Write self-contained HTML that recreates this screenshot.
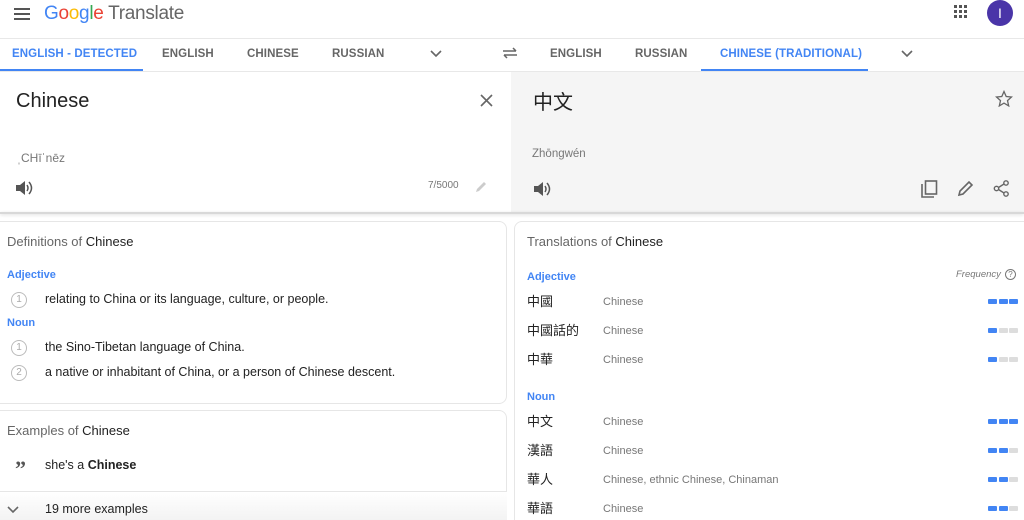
<!DOCTYPE html>
<html><head><meta charset="utf-8"><style>
*{margin:0;padding:0;box-sizing:border-box}
html,body{width:1024px;height:520px;overflow:hidden}
body{background:#fff;font-family:"Liberation Sans","Noto Sans CJK TC",sans-serif;color:#222;position:relative}
.a{position:absolute;white-space:nowrap;line-height:1.2}
.tab{position:absolute;top:47px;font-size:11.5px;font-weight:bold;color:#666;letter-spacing:.1px;line-height:14px}
.blue{color:#4285f4}
.card{position:absolute;border:1px solid #e6e6e6;border-radius:8px;background:#fff}
.num{position:absolute;width:16px;height:16px;border:1px solid #bbb;border-radius:50%;font-size:10px;color:#aaa;text-align:center;line-height:14px}
.f{position:absolute;left:988px;width:32px;height:5px;display:flex;gap:1.5px}
.f i{display:block;width:9px;height:5px;border-radius:1px;background:#4285f4}
.f i.o{background:#ddd}
.zh{font-size:13px;color:#222;line-height:16px;font-family:"Noto Sans CJK TC",sans-serif}
.en{font-size:11px;color:#777;line-height:14px}
</style></head><body>
<!-- header -->
<div class="a" style="left:14px;top:8px;width:16px;height:2px;background:#555;box-shadow:0 5px 0 #555,0 10px 0 #555"></div>
<div class="a" style="left:44px;top:3px;font-size:19px;line-height:22px;letter-spacing:-.3px"><span style="color:#4285f4">G</span><span style="color:#ea4335">o</span><span style="color:#fbbc05">o</span><span style="color:#4285f4">g</span><span style="color:#34a853">l</span><span style="color:#ea4335">e</span><span style="color:#666"> Translate</span></div>
<svg class="a" style="left:954px;top:5px" width="14" height="14"><g fill="#555"><rect x="0" y="0" width="3" height="3"/><rect x="5" y="0" width="3" height="3"/><rect x="10" y="0" width="3" height="3"/><rect x="0" y="5" width="3" height="3"/><rect x="5" y="5" width="3" height="3"/><rect x="10" y="5" width="3" height="3"/><rect x="0" y="10" width="3" height="3"/><rect x="5" y="10" width="3" height="3"/><rect x="10" y="10" width="3" height="3"/></g></svg>
<div class="a" style="left:987px;top:0;width:26px;height:26px;border-radius:50%;background:#4a35a8;color:#fff;font-size:14px;text-align:center;line-height:26px">I</div>
<div class="a" style="left:0;top:38px;width:1024px;height:1px;background:#e8e8e8"></div>
<!-- tabs -->
<div class="tab blue" style="left:12px">ENGLISH - DETECTED</div>
<div class="tab" style="left:162px">ENGLISH</div>
<div class="tab" style="left:247px">CHINESE</div>
<div class="tab" style="left:332px">RUSSIAN</div>
<svg class="a" style="left:430px;top:50px" width="12" height="8"><path d="M1 1l5 5 5-5" fill="none" stroke="#666" stroke-width="1.6"/></svg>
<svg class="a" style="left:502px;top:47px" width="16" height="12"><path d="M1 4h13M11 1l3 3M15 8H2M5 11L2 8" fill="none" stroke="#666" stroke-width="1.5"/></svg>
<div class="tab" style="left:550px">ENGLISH</div>
<div class="tab" style="left:635px">RUSSIAN</div>
<div class="tab blue" style="left:720px">CHINESE (TRADITIONAL)</div>
<svg class="a" style="left:901px;top:50px" width="12" height="8"><path d="M1 1l5 5 5-5" fill="none" stroke="#666" stroke-width="1.6"/></svg>
<div class="a" style="left:0;top:69px;width:143px;height:3px;background:#4285f4"></div>
<div class="a" style="left:701px;top:69px;width:167px;height:3px;background:#4285f4"></div>
<div class="a" style="left:0;top:71px;width:1024px;height:1px;background:#e8e8e8"></div>
<!-- panels -->
<div class="a" style="left:511px;top:72px;width:513px;height:140px;background:#f5f5f5"></div>
<div class="a" style="left:0;top:212px;width:1024px;height:2px;background:#d8d8d8;box-shadow:0 1px 3px rgba(0,0,0,.15)"></div>
<div class="a" style="left:16px;top:89px;font-size:20px;line-height:24px;color:#222">Chinese</div>
<svg class="a" style="left:480px;top:94px" width="13" height="13"><path d="M1 1l11 11M12 1L1 12" stroke="#666" stroke-width="1.6"/></svg>
<div class="a" style="left:17px;top:151px;font-size:12px;color:#777">ˌCHīˈnēz</div>
<svg class="a" style="left:15px;top:180px" width="18" height="16"><path d="M1 5h4l5-4v14l-5-4H1z" fill="#555"/><path d="M12 5q2 3 0 6M14 2q5 6 0 12" fill="none" stroke="#555" stroke-width="1.5"/></svg>
<div class="a" style="left:428px;top:180px;font-size:10px;color:#777">7/5000</div>
<svg class="a" style="left:475px;top:181px" width="12" height="12"><path d="M1 11l1-3 7-7 2 2-7 7z" fill="#ccc"/></svg>
<div class="a" style="left:533px;top:88px;font-size:20px;line-height:26px;color:#222;font-family:'Noto Sans CJK TC',sans-serif">中文</div>
<svg class="a" style="left:995px;top:90px" width="18" height="17"><path d="M9 1.5l2.2 5 5.3.5-4 3.6 1.2 5.3L9 13.1l-4.7 2.8 1.2-5.3-4-3.6 5.3-.5z" fill="none" stroke="#666" stroke-width="1.3"/></svg>
<div class="a" style="left:532px;top:148px;font-size:11.5px;color:#777">Zhōngwén</div>
<svg class="a" style="left:533px;top:181px" width="18" height="16"><path d="M1 5h4l5-4v14l-5-4H1z" fill="#555"/><path d="M12 5q2 3 0 6M14 2q5 6 0 12" fill="none" stroke="#555" stroke-width="1.5"/></svg>
<svg class="a" style="left:920px;top:180px" width="18" height="18"><path d="M2 4v13h12" fill="none" stroke="#666" stroke-width="1.6"/><rect x="5.5" y="1" width="11" height="13" fill="none" stroke="#666" stroke-width="1.6"/></svg>
<svg class="a" style="left:957px;top:180px" width="17" height="17"><path d="M2 15l1-4 9-9 3 3-9 9z" fill="none" stroke="#666" stroke-width="1.6"/></svg>
<svg class="a" style="left:993px;top:180px" width="17" height="17"><circle cx="13" cy="3" r="2.2" fill="none" stroke="#666" stroke-width="1.4"/><circle cx="3.5" cy="8.5" r="2.2" fill="none" stroke="#666" stroke-width="1.4"/><circle cx="13" cy="14" r="2.2" fill="none" stroke="#666" stroke-width="1.4"/><path d="M5.5 7.5l5.5-3.5M5.5 9.5l5.5 3.5" stroke="#666" stroke-width="1.4"/></svg>
<!-- definitions -->
<div class="card" style="left:-8px;top:221px;width:515px;height:183px"></div>
<div class="a" style="left:7px;top:234px;font-size:13px;color:#666">Definitions of <span style="color:#222">Chinese</span></div>
<div class="a blue" style="left:7px;top:269px;font-size:11px;font-weight:bold">Adjective</div>
<div class="num" style="left:11px;top:292px">1</div>
<div class="a" style="left:45px;top:292px;font-size:12.5px">relating to China or its language, culture, or people.</div>
<div class="a blue" style="left:7px;top:317px;font-size:11px;font-weight:bold">Noun</div>
<div class="num" style="left:11px;top:340px">1</div>
<div class="a" style="left:45px;top:340px;font-size:12.5px">the Sino-Tibetan language of China.</div>
<div class="num" style="left:11px;top:365px">2</div>
<div class="a" style="left:45px;top:365px;font-size:12.5px">a native or inhabitant of China, or a person of Chinese descent.</div>
<!-- examples -->
<div class="card" style="left:-8px;top:410px;width:515px;height:130px"></div>
<div class="a" style="left:7px;top:423px;font-size:13px;color:#666">Examples of <span style="color:#222">Chinese</span></div>
<div class="a" style="left:15px;top:458px;font-size:22px;line-height:22px;font-weight:bold;color:#555;font-family:'Liberation Serif',serif">”</div>
<div class="a" style="left:45px;top:458px;font-size:12.5px">she's a <b>Chinese</b></div>
<div class="a" style="left:0;top:491px;width:507px;height:1px;background:#e6e6e6"></div>
<div class="a" style="left:0;top:492px;width:507px;height:28px;background:linear-gradient(#fff,#f3f3f3)"></div>
<svg class="a" style="left:7px;top:506px" width="12" height="8"><path d="M1 1l5 5 5-5" fill="none" stroke="#666" stroke-width="1.6"/></svg>
<div class="a" style="left:45px;top:502px;font-size:12.5px">19 more examples</div>
<!-- translations -->
<div class="card" style="left:514px;top:221px;width:520px;height:320px"></div>
<div class="a" style="left:527px;top:234px;font-size:13px;color:#666">Translations of <span style="color:#222">Chinese</span></div>
<div class="a blue" style="left:527px;top:271px;font-size:11px;font-weight:bold">Adjective</div>
<div class="a" style="left:956px;top:269px;font-size:9.5px;font-style:italic;color:#777">Frequency</div>
<div class="a" style="left:1005px;top:269px;width:11px;height:11px;border:1px solid #777;border-radius:50%;font-size:8px;color:#777;text-align:center;line-height:10px">?</div>
<div class="a zh" style="left:527px;top:293px">中國</div><div class="a en" style="left:603px;top:295px">Chinese</div><div class="f" style="top:299px"><i></i><i></i><i></i></div>
<div class="a zh" style="left:527px;top:322px">中國話的</div><div class="a en" style="left:603px;top:324px">Chinese</div><div class="f" style="top:328px"><i></i><i class="o"></i><i class="o"></i></div>
<div class="a zh" style="left:527px;top:351px">中華</div><div class="a en" style="left:603px;top:353px">Chinese</div><div class="f" style="top:357px"><i></i><i class="o"></i><i class="o"></i></div>
<div class="a blue" style="left:527px;top:391px;font-size:11px;font-weight:bold">Noun</div>
<div class="a zh" style="left:527px;top:413px">中文</div><div class="a en" style="left:603px;top:415px">Chinese</div><div class="f" style="top:419px"><i></i><i></i><i></i></div>
<div class="a zh" style="left:527px;top:442px">漢語</div><div class="a en" style="left:603px;top:444px">Chinese</div><div class="f" style="top:448px"><i></i><i></i><i class="o"></i></div>
<div class="a zh" style="left:527px;top:471px">華人</div><div class="a en" style="left:603px;top:473px">Chinese, ethnic Chinese, Chinaman</div><div class="f" style="top:477px"><i></i><i></i><i class="o"></i></div>
<div class="a zh" style="left:527px;top:500px">華語</div><div class="a en" style="left:603px;top:502px">Chinese</div><div class="f" style="top:506px"><i></i><i></i><i class="o"></i></div>
</body></html>
